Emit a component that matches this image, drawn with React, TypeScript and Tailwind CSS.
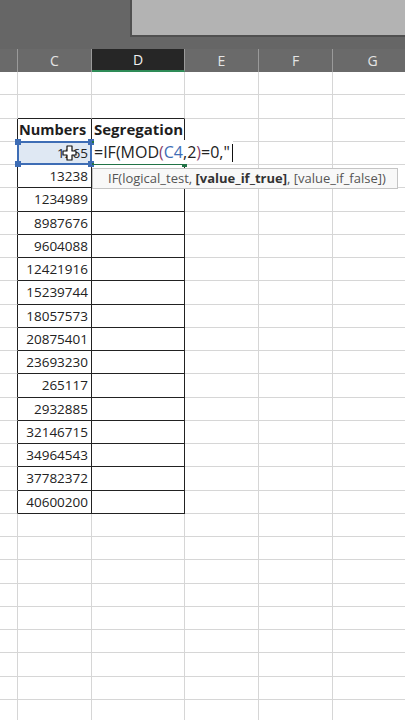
import React from "react";

const widths = ["w-[18px]", "w-[74px]", "w-[93px]", "w-[74px]", "w-[74px]", "w-[80px]"];
const letters = ["", "C", "D", "E", "F", "G"];

const numbers = [
  "13238", "1234989", "8987676", "9604088", "12421916", "15239744", "18057573",
  "20875401", "23693230", "265117", "2932885", "32146715", "34964543", "37782372", "40600200",
];

const font = { fontFamily: '"Open Sans", "Noto Sans", sans-serif' };

function CrossCursor() {
  return (
    <svg width="15" height="16" viewBox="0 0 15 16" className="absolute left-[44px] top-[3px]">
      <path
        d="M5 1h5v5h4v4h-4v5H5v-5H1V6h4z"
        fill="#ffffff"
        stroke="#111111"
        strokeWidth="1.2"
        strokeLinejoin="round"
      />
    </svg>
  );
}

function Handle({ pos }: { pos: string }) {
  return <span className={`absolute h-[6px] w-[6px] bg-[#3e6db5] ${pos}`} />;
}

function cellBorder(row: number, col: number): string {
  const inTable = row >= 2 && row <= 18;
  if (inTable && (col === 1 || col === 2)) return "border-r border-b border-r-[#222] border-b-[#222]";
  if (inTable && col === 0) return "border-r border-b border-r-[#222] border-b-[#d6d6d6]";
  if (row === 1 && (col === 1 || col === 2)) return "border-r border-b border-r-[#d6d6d6] border-b-[#222]";
  return "border-r border-b border-[#d6d6d6]";
}

function Cell({ row, col }: { row: number; col: number }) {
  const base = `${widths[col]} h-[23.25px] shrink-0 ${cellBorder(row, col)}`;

  if (row === 2 && col === 1) {
    return <div className={`${base} flex items-end pl-[1px] text-[14.5px] font-bold text-[#1e1e1e]`}>Numbers</div>;
  }
  if (row === 2 && col === 2) {
    return <div className={`${base} flex items-end pl-[2px] text-[15px] font-bold text-[#1e1e1e]`}>Segregation</div>;
  }
  if (row === 3 && col === 1) {
    return (
      <div className={`${base} relative flex items-end justify-end bg-[#dfe8f3] pr-[3px] pb-[1px] text-[13.5px] text-[#222]`}>
        1265
        <div className="pointer-events-none absolute -left-[1px] -top-[1px] h-[24px] w-[75px] border-2 border-[#3e6db5]" />
        <Handle pos="-left-[3px] -top-[3px]" />
        <Handle pos="-right-[3px] -top-[3px]" />
        <Handle pos="-left-[3px] -bottom-[3px]" />
        <Handle pos="-right-[3px] -bottom-[3px]" />
        <CrossCursor />
      </div>
    );
  }
  if (row === 3 && col === 2) {
    return (
      <div className={`${base} relative z-10 border-r-transparent`}>
        <div className="absolute left-0 top-[-1px] h-[2px] w-[90px] bg-[#217346]" />
        <div className="absolute left-0 bottom-[-1px] h-[2px] w-[93px] bg-[#217346]" />
        <span className="absolute -right-[3px] -bottom-[3px] h-[5px] w-[5px] bg-[#217346]" />
        <div className="absolute left-[2px] bottom-[0px] flex items-end whitespace-nowrap bg-white text-[16px] text-[#222]">
          <span>=IF(MOD</span>
          <span className="text-[#8a3d68]">(</span>
          <span className="text-[#3e6db5]">C4</span>
          <span>,2</span>
          <span className="text-[#8a3d68]">)</span>
          <span>=0,"</span>
          <span className="ml-[2px] mb-[2px] h-[18px] w-[1.5px] bg-[#111]" />
        </div>
      </div>
    );
  }
  if (row >= 4 && row <= 18 && col === 1) {
    return (
      <div className={`${base} flex items-end justify-end pr-[3px] pb-[1px] text-[13.5px] text-[#222]`}>
        {numbers[row - 4]}
      </div>
    );
  }
  return <div className={base} />;
}

export default function App() {
  const rows = Array.from({ length: 28 }, (_, i) => i);
  return (
    <div className="relative h-[720px] w-[405px] overflow-hidden bg-white" style={font}>
      <div className="flex h-[49px] bg-[#666666]">
        <div className="w-[130px] shrink-0" />
        <div className="h-[37px] flex-1 border-b-2 border-l-2 border-[#505050] bg-[#b3b3b3]" />
      </div>
      <div className="flex h-[23px] bg-[#6a6a6a]">
        {letters.map((l, i) => (
          <div
            key={i}
            className={`${widths[i]} flex h-full shrink-0 items-center justify-center border-r border-[#9a9a9a] text-[14px] ${
              i === 2 ? "border-b-2 border-b-[#2e8b57] bg-[#262626] text-[#f0f0f0]" : "text-[#e4e4e4]"
            }`}
          >
            {l}
          </div>
        ))}
      </div>
      <div className="flex flex-col">
        {rows.map((r) => (
          <div key={r} className="flex">
            {widths.map((_, c) => (
              <Cell key={c} row={r} col={c} />
            ))}
          </div>
        ))}
      </div>
      <div className="absolute left-[92px] top-[168px] flex h-[21px] w-[306px] items-center whitespace-nowrap border border-[#c4c4c4] bg-[#f8f8f8] pl-[15px] text-[13px] text-[#555]">
        <span>IF(logical_test,&nbsp;</span>
        <span className="font-bold text-[#333]">[value_if_true]</span>
        <span>, [value_if_false])</span>
      </div>
    </div>
  );
}
